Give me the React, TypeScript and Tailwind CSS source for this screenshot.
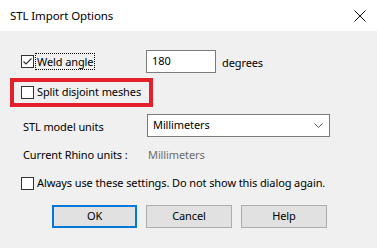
import React from "react";

function Box({ checked }: { checked?: boolean }) {
  return (
    <div className="w-[13px] h-[13px] border border-[#333333] bg-white flex items-center justify-center shrink-0">
      {checked && (
        <svg width="11" height="11" viewBox="0 0 11 11">
          <path d="M1.5 5.5 L4 8 L9.5 2.5" fill="none" stroke="#333333" strokeWidth="1.2" />
        </svg>
      )}
    </div>
  );
}

export default function App() {
  return (
    <div
      className="w-[377px] h-[248px] bg-[#f0f0f0] text-[11px] tracking-[-0.1px] text-black overflow-hidden whitespace-nowrap"
      style={{ fontFamily: '"Segoe UI", "Noto Sans", sans-serif' }}
    >
      {/* title bar */}
      <div className="h-[31px] bg-white flex items-center justify-between pl-[10px] pr-[11px]">
        <span className="text-[11.5px]">STL Import Options</span>
        <svg width="12" height="12" viewBox="0 0 12 12">
          <path d="M0.5 0.5 L11.5 11.5 M11.5 0.5 L0.5 11.5" stroke="#111" strokeWidth="1" />
        </svg>
      </div>

      {/* weld angle */}
      <div className="flex items-center h-[23px] mt-[19px]">
        <div className="w-[146px] pl-[21px] flex items-center">
          <Box checked />
          <span className="ml-[1px] px-[1px] leading-[15px] border border-dotted border-black">Weld angle</span>
        </div>
        <div className="w-[70px] h-[23px] bg-white border border-[#7a7a7a] pl-[5px] flex items-center">180</div>
        <span className="ml-[6px] mt-[4px]">degrees</span>
      </div>

      {/* split disjoint meshes */}
      <div className="mt-[5px] ml-[10px] w-[143px] h-[29px] border-4 border-[#e3202b] flex items-center pl-[7px]">
        <Box />
        <span className="ml-[3px]">Split disjoint meshes</span>
      </div>

      {/* units */}
      <div className="flex items-center h-[23px] mt-[7px]">
        <span className="w-[147px] pl-[23px] mt-[4px]">STL model units</span>
        <div className="w-[183px] h-[23px] bg-white border border-[#7a7a7a] pl-[5px] pr-[6px] flex items-center justify-between">
          <span>Millimeters</span>
          <svg width="9" height="6" viewBox="0 0 9 6">
            <path d="M0.5 0.5 L4.5 4.5 L8.5 0.5" fill="none" stroke="#555" strokeWidth="1" />
          </svg>
        </div>
      </div>

      <div className="flex items-center h-[18px] mt-[9px]">
        <span className="w-[148px] pl-[23px]">Current Rhino units :</span>
        <span className="text-[#6d6d6d]">Millimeters</span>
      </div>

      {/* always use */}
      <div className="flex items-center h-[17px] mt-[11px] pl-[21px]">
        <Box />
        <span className="ml-[3px]">Always use these settings. Do not show this dialog again.</span>
      </div>

      {/* buttons */}
      <div className="flex gap-[9px] mt-[13px] pl-[52px]">
        <button className="w-[85px] h-[23px] bg-[#e1e1e1] border-2 border-[#0078d7]">OK</button>
        <button className="w-[86px] h-[23px] bg-[#e1e1e1] border border-[#adadad]">Cancel</button>
        <button className="w-[86px] h-[23px] bg-[#e1e1e1] border border-[#adadad]">Help</button>
      </div>
    </div>
  );
}
